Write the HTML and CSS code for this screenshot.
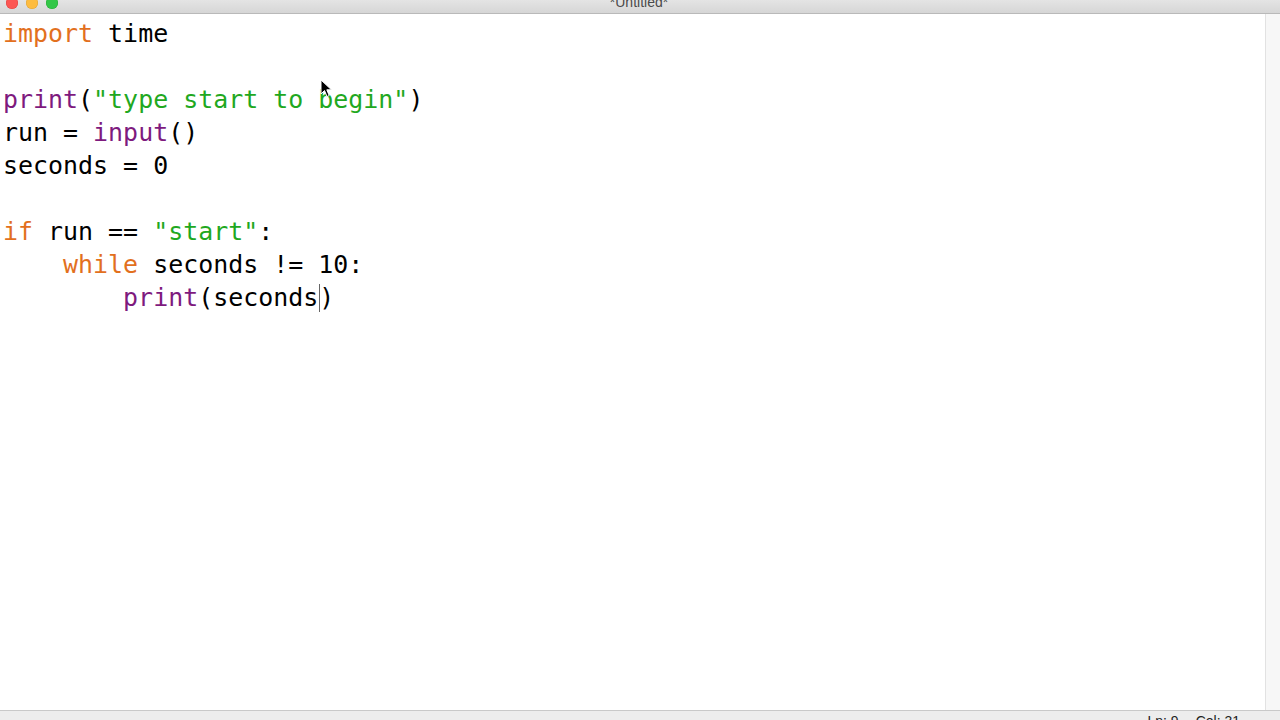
FILE: index.html
```html
<!DOCTYPE html>
<html>
<head>
<meta charset="utf-8">
<link rel="stylesheet" href="styles.css">
</head>
<body>
<div class="window">
  <div class="titlebar">
    <div class="lights">
      <span class="light red"></span>
      <span class="light yellow"></span>
      <span class="light green"></span>
    </div>
    <div class="title">*Untitled*</div>
  </div>
  <div class="main">
    <pre class="editor"><span class="kw">import</span> time

<span class="bi">print</span>(<span class="str">"type start to begin"</span>)
run = <span class="bi">input</span>()
seconds = 0

<span class="kw">if</span> run == <span class="str">"start"</span>:
    <span class="kw">while</span> seconds != 10:
        <span class="bi">print</span>(seconds<span class="caret"></span>)</pre>
    <div class="scrollbar"></div>
  </div>
  <div class="statusbar">
    <span class="stat">Ln: 9</span>
    <span class="stat">Col: 31</span>
  </div>
  <svg class="pointer" width="14" height="20" viewBox="0 0 14 20">
    <path d="M1 1 L1 15 L4.5 11.5 L7 17.5 L9.2 16.5 L6.8 10.8 L11.5 10.8 Z" fill="#000" stroke="#fff" stroke-width="1"/>
  </svg>
</div>
</body>
</html>
```
FILE: styles.css
```css
html, body {
  margin: 0;
  padding: 0;
  background: #ffffff;
}
.window {
  position: relative;
  width: 1280px;
  height: 720px;
  overflow: hidden;
  display: flex;
  flex-direction: column;
  background: #ffffff;
}
.titlebar {
  position: relative;
  height: 13px;
  flex: 0 0 13px;
  background: linear-gradient(#e4e4e4, #d6d6d6);
  border-bottom: 1px solid #b9b9b9;
  display: flex;
  align-items: flex-start;
  justify-content: center;
  overflow: hidden;
}
.lights {
  position: absolute;
  left: 6px;
  top: -3px;
  display: flex;
  gap: 8px;
}
.light {
  width: 12px;
  height: 12px;
  border-radius: 50%;
  display: block;
}
.red { background: #fc5753; box-shadow: inset 0 0 0 0.5px #de4540; }
.yellow { background: #fdbc40; box-shadow: inset 0 0 0 0.5px #dea236; }
.green { background: #33c748; box-shadow: inset 0 0 0 0.5px #27aa35; }
.title {
  font-family: "Liberation Sans", Arial, sans-serif;
  font-size: 14px;
  line-height: 14px;
  color: #4a4a4a;
  margin-top: -5px;
  margin-left: -2px;
}
.main {
  flex: 1;
  display: flex;
  min-height: 0;
}
.editor {
  flex: 1;
  margin: 0;
  padding: 3px 0 0 3px;
  font-family: "DejaVu Sans Mono", "Liberation Mono", monospace;
  font-size: 24.95px;
  line-height: 33px;
  color: #000000;
  white-space: pre;
}
.kw { color: #e2701e; }
.bi { color: #7e1a7e; }
.str { color: #1fa821; }
.caret {
  display: inline-block;
  width: 0;
  height: 28px;
  border-left: 1px solid #666;
  vertical-align: -6px;
  margin-left: 1px;
  margin-right: -1px;
}
.scrollbar {
  width: 14px;
  flex: 0 0 14px;
  background: #f7f7f7;
  border-left: 1px solid #e2e2e2;
}
.statusbar {
  height: 9px;
  flex: 0 0 9px;
  border-top: 1px solid #c9c9c9;
  background: #ededed;
  display: flex;
  justify-content: flex-end;
  gap: 17px;
  padding-right: 40px;
  overflow: hidden;
}
.stat {
  font-family: "Liberation Sans", Arial, sans-serif;
  font-size: 14px;
  line-height: 14px;
  color: #222;
  margin-top: 3px;
}
.pointer {
  position: absolute;
  left: 320px;
  top: 79px;
}
```
